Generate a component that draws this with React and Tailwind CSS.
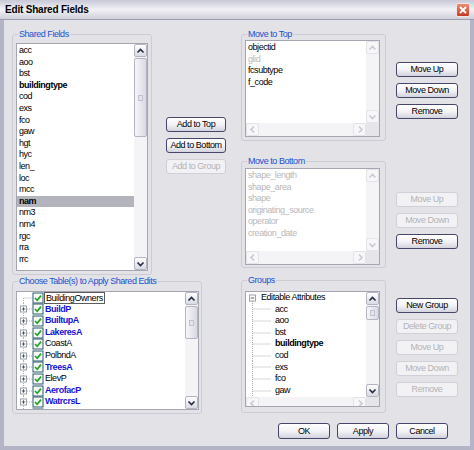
import React from "react";

const font = "font-['Liberation_Sans',Arial,sans-serif]";

const Chevron = ({ dir, disabled }) => {
  const color = disabled ? "#c9c9d2" : "#222a40";
  if (dir === "left" || dir === "right") {
    return (
      <svg width="8" height="9" viewBox="0 0 8 9">
        <path
          d={dir === "left" ? "M5 1.5 L2 4.5 L5 7.5" : "M3 1.5 L6 4.5 L3 7.5"}
          fill="none"
          stroke={color}
          strokeWidth="1.6"
        />
      </svg>
    );
  }
  return (
    <svg width="9" height="8" viewBox="0 0 9 8">
      <path
        d={dir === "up" ? "M1.5 5.5 L4.5 2.5 L7.5 5.5" : "M1.5 2.5 L4.5 5.5 L7.5 2.5"}
        fill="none"
        stroke={color}
        strokeWidth="1.6"
      />
    </svg>
  );
};

const ArrowBox = ({ dir, disabled }) => (
  <div
    className={`w-[13px] h-[13px] shrink-0 flex items-center justify-center rounded-[2px] border ${
      disabled
        ? "border-[#e3e3ea] bg-[#f7f7f9]"
        : "border-[#b4b4c3] bg-linear-to-b from-white to-[#dadae4]"
    }`}
  >
    <Chevron dir={dir} disabled={disabled} />
  </div>
);

const VScroll = ({ thumbTop = 0, thumbH = 0, disabled = false }) => (
  <div className="w-[13px] shrink-0 h-full flex flex-col bg-[#f4f4f7]">
    <ArrowBox dir="up" disabled={disabled} />
    <div className="flex-1 flex flex-col">
      {thumbH > 0 && (
        <>
          <div style={{ height: thumbTop }} />
          <div
            style={{ height: thumbH }}
            className="rounded-[2px] border border-[#b4b4c3] bg-linear-to-r from-[#f6f6fa] to-[#d9d9e3] flex items-center justify-center"
          >
            <div className="w-[5px] h-[6px] border border-[#c2c2ce] bg-[#e4e4ec]" />
          </div>
        </>
      )}
    </div>
    <ArrowBox dir="down" disabled={disabled} />
  </div>
);

const HScroll = () => (
  <div className="h-[13px] flex shrink-0">
    <div className="flex-1 flex bg-[#f4f4f7]">
      <ArrowBox dir="left" disabled />
      <div className="flex-1" />
      <ArrowBox dir="right" disabled />
    </div>
    <div className="w-[13px] h-[13px] bg-[#e6e5ea]" />
  </div>
);

const GroupBox = ({ label, className = "", children }) => (
  <div className={`relative rounded-[3px] border border-[#cdccd5] ${className}`}>
    <span className="absolute left-[5px] -top-[6px] px-[1px] leading-[11px] bg-[#e3e2e7] text-[#2150cf] whitespace-nowrap">
      {label}
    </span>
    {children}
  </div>
);

const Btn = ({ children, disabled = false, className = "" }) => (
  <button
    type="button"
    className={`flex items-center justify-center h-[15px] rounded-[3px] border leading-none whitespace-nowrap ${
      disabled
        ? "border-[#d0d0d6] bg-[#f2f2f4] text-[#b3b3b8]"
        : "border-[#46466a] bg-linear-to-b from-white via-[#f3f3f7] to-[#d3d3de] text-black"
    } ${className}`}
  >
    {children}
  </button>
);

const sharedFields = [
  { t: "acc" },
  { t: "aoo" },
  { t: "bst" },
  { t: "buildingtype", b: true },
  { t: "cod" },
  { t: "exs" },
  { t: "fco" },
  { t: "gaw" },
  { t: "hgt" },
  { t: "hyc" },
  { t: "len_" },
  { t: "loc" },
  { t: "mcc" },
  { t: "nam", b: true, sel: true },
  { t: "nm3" },
  { t: "nm4" },
  { t: "rgc" },
  { t: "rra" },
  { t: "rrc" },
];

const tables = [
  { t: "BuildingOwners", first: true },
  { t: "BuildP", blue: true },
  { t: "BuiltupA", blue: true },
  { t: "LakeresA", blue: true },
  { t: "CoastA" },
  { t: "PolbndA" },
  { t: "TreesA", blue: true },
  { t: "ElevP" },
  { t: "AerofacP", blue: true },
  { t: "WatrcrsL", blue: true },
  { t: "" },
];

const groupItems = [
  { t: "acc" },
  { t: "aoo" },
  { t: "bst" },
  { t: "buildingtype", b: true },
  { t: "cod" },
  { t: "exs" },
  { t: "fco" },
  { t: "gaw" },
];

const Row = ({ children, className = "" }) => (
  <div className={`h-[11.6px] leading-[11.6px] whitespace-nowrap ${className}`}>{children}</div>
);

const TableRow = ({ t, blue, first }) => (
  <div className="flex items-center h-[11.6px] shrink-0">
    <svg width="27" height="12" viewBox="0 0 27 12" className="shrink-0">
      <line x1="6.5" y1={first ? 6 : 0} x2="6.5" y2="12" stroke="#b0b0b0" strokeDasharray="1 1" />
      {first ? (
        <line x1="6.5" y1="6" x2="16" y2="6" stroke="#b0b0b0" strokeDasharray="1 1" />
      ) : (
        <g>
          <line x1="10" y1="6" x2="16" y2="6" stroke="#b0b0b0" strokeDasharray="1 1" />
          <rect x="3.5" y="3" width="6" height="6" fill="#fff" stroke="#9aa3ab" />
          <path d="M4.8 6 H8.2 M6.5 4.3 V7.7" stroke="#444" strokeWidth="0.9" />
        </g>
      )}
      <rect x="16" y="1" width="10" height="10" fill="#f6faf6" stroke="#2c5a6e" />
      <path d="M18 6 L20.2 8.3 L24 3.6" fill="none" stroke="#23a323" strokeWidth="1.7" />
    </svg>
    {first ? (
      <span className="border border-[#5c5c5c] px-[1px] leading-[10px] w-[61px]">{t}</span>
    ) : (
      <span className={`ml-[1px] ${blue ? "font-bold text-[#1414dc]" : ""}`}>{t}</span>
    )}
  </div>
);

const GroupRow = ({ t, b, root }) => (
  <div className="flex items-center h-[11.6px] shrink-0">
    {root ? (
      <svg width="15" height="12" viewBox="0 0 15 12" className="shrink-0">
        <line x1="6.5" y1="9" x2="6.5" y2="12" stroke="#b0b0b0" strokeDasharray="1 1" />
        <rect x="3.5" y="3" width="6" height="6" fill="#fff" stroke="#9aa3ab" />
        <path d="M4.8 6 H8.2" stroke="#444" strokeWidth="0.9" />
      </svg>
    ) : (
      <svg width="29" height="12" viewBox="0 0 29 12" className="shrink-0">
        <line x1="6.5" y1="0" x2="6.5" y2="12" stroke="#b0b0b0" strokeDasharray="1 1" />
        <line x1="6.5" y1="6" x2="25" y2="6" stroke="#b0b0b0" strokeDasharray="1 1" />
      </svg>
    )}
    <span className={b ? "font-bold" : ""}>{t}</span>
  </div>
);

export default function App() {
  return (
    <div
      className={`w-[474px] h-[450px] flex flex-col bg-[#e3e2e7] text-black ${font} text-[9px] tracking-[-0.45px] overflow-hidden`}
    >
      {/* title bar */}
      <div className="h-[20px] shrink-0 flex items-center justify-between pl-[5px] pr-[4px] bg-linear-to-b from-[#c8c8d8] via-[#f1f1f5] to-[#d0d0db] border-b border-[#9d9db0]">
        <span className="text-[10px] font-bold tracking-[-0.2px]">Edit Shared Fields</span>
        <div className="w-[14px] h-[14px] rounded-[2px] border border-[#f3e4df] bg-linear-to-b from-[#ea8c74] to-[#c3381e] flex items-center justify-center">
          <svg width="8" height="8" viewBox="0 0 8 8">
            <path d="M1 1 L7 7 M7 1 L1 7" stroke="#fff" strokeWidth="1.8" />
          </svg>
        </div>
      </div>

      <div className="flex-1 flex flex-col border-x-4 border-b-4 border-[#b4b4c7] pl-[8px] pt-[14px]">
        <div className="flex">
          {/* left column */}
          <div className="w-[214px] flex flex-col">
            <div className="flex">
              <GroupBox label="Shared Fields" className="w-[140px] h-[241px] pt-[8px] pl-[3px]">
                <div className="w-[132px] h-[228px] border border-[#a6a5b2] bg-white flex">
                  <div className="flex-1 flex flex-col pt-[1px] overflow-hidden">
                    {sharedFields.map((f) => (
                      <Row
                        key={f.t}
                        className={`pl-[2px] ${f.b ? "font-bold" : ""} ${f.sel ? "bg-[#b4b4bd]" : ""}`}
                      >
                        {f.t}
                      </Row>
                    ))}
                  </div>
                  <VScroll thumbTop={1} thumbH={79} />
                </div>
              </GroupBox>
              <div className="ml-[14px] mt-[83px] w-[60px] flex flex-col gap-[6px]">
                <Btn>Add to Top</Btn>
                <Btn>Add to Bottom</Btn>
                <Btn disabled>Add to Group</Btn>
              </div>
            </div>

            <GroupBox
              label="Choose Table(s) to Apply Shared Edits"
              className="mt-[6px] w-[190px] h-[133px] pt-[9px] pl-[3px]"
            >
              <div className="w-[183px] h-[119px] border border-[#a6a5b2] bg-white flex">
                <div className="flex-1 flex flex-col overflow-hidden">
                  {tables.map((r, i) => (
                    <TableRow key={i} {...r} />
                  ))}
                </div>
                <VScroll thumbTop={1} thumbH={33} />
              </div>
            </GroupBox>
          </div>

          {/* right column */}
          <div className="ml-[15px] flex flex-col">
            <div className="flex">
              <GroupBox label="Move to Top" className="w-[145px] h-[107px] pt-[5px] pl-[3px]">
                <div className="w-[135px] h-[97px] border border-[#a6a5b2] bg-white flex flex-col">
                  <div className="flex-1 flex min-h-0">
                    <div className="flex-1 flex flex-col pl-[2px] pt-[1px]">
                      <Row>objectid</Row>
                      <Row className="text-[#b8b8bc]">glid</Row>
                      <Row>fcsubtype</Row>
                      <Row>f_code</Row>
                    </div>
                    <VScroll disabled />
                  </div>
                  <HScroll />
                </div>
              </GroupBox>
              <div className="ml-[10px] mt-[28px] w-[62px] flex flex-col gap-[6px]">
                <Btn>Move Up</Btn>
                <Btn>Move Down</Btn>
                <Btn>Remove</Btn>
              </div>
            </div>

            <div className="flex mt-[20px]">
              <GroupBox label="Move to Bottom" className="w-[145px] h-[107px] pt-[6px] pl-[3px]">
                <div className="w-[135px] h-[97px] border border-[#a6a5b2] bg-white flex flex-col">
                  <div className="flex-1 flex min-h-0">
                    <div className="flex-1 flex flex-col pl-[2px] pt-[1px] text-[#b8b8bc]">
                      <Row>shape_length</Row>
                      <Row>shape_area</Row>
                      <Row>shape</Row>
                      <Row>originating_source</Row>
                      <Row>operator</Row>
                      <Row>creation_date</Row>
                    </div>
                    <VScroll disabled />
                  </div>
                  <HScroll />
                </div>
              </GroupBox>
              <div className="ml-[10px] mt-[31px] w-[62px] flex flex-col gap-[6px]">
                <Btn disabled>Move Up</Btn>
                <Btn disabled>Move Down</Btn>
                <Btn>Remove</Btn>
              </div>
            </div>

            <div className="flex mt-[12px]">
              <GroupBox label="Groups" className="w-[145px] h-[133px] pt-[10px] pl-[3px]">
                <div className="w-[135px] h-[116px] border border-[#a6a5b2] bg-white flex flex-col">
                  <div className="h-[105px] flex shrink-0">
                    <div className="flex-1 flex flex-col overflow-hidden">
                      <GroupRow t="Editable Attributes" root />
                      {groupItems.map((g) => (
                        <GroupRow key={g.t} {...g} />
                      ))}
                    </div>
                    <VScroll thumbTop={1} thumbH={14} />
                  </div>
                  <div className="flex-1 overflow-hidden">
                    <HScroll />
                  </div>
                </div>
              </GroupBox>
              <div className="ml-[10px] mt-[18px] w-[62px] flex flex-col gap-[6px]">
                <Btn>New Group</Btn>
                <Btn disabled>Delete Group</Btn>
                <Btn disabled>Move Up</Btn>
                <Btn disabled>Move Down</Btn>
                <Btn disabled>Remove</Btn>
              </div>
            </div>
          </div>
        </div>

        <div className="mt-[9px] flex justify-end gap-[7px] pr-[22px]">
          <Btn className="w-[52px] h-[16px]">OK</Btn>
          <Btn className="w-[52px] h-[16px]">Apply</Btn>
          <Btn className="w-[52px] h-[16px]">Cancel</Btn>
        </div>
      </div>
    </div>
  );
}
